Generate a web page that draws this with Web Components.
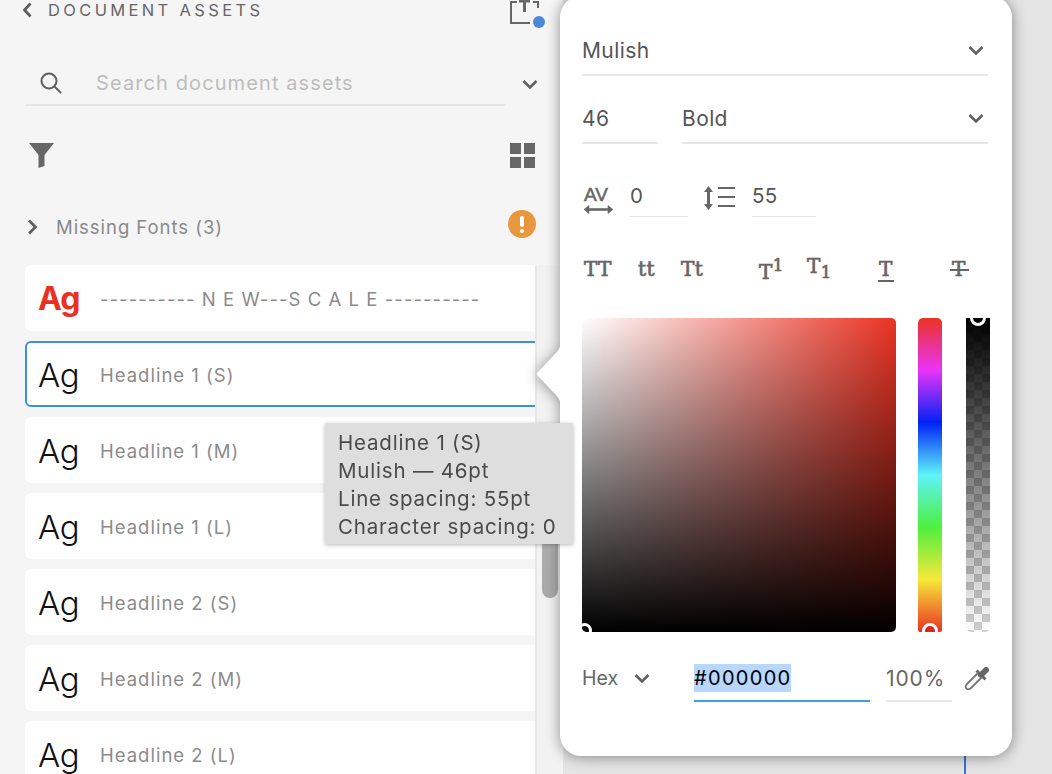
<!DOCTYPE html>
<html><head><meta charset="utf-8">
<style>
html,body{margin:0;padding:0;width:1052px;height:774px;overflow:hidden;background:#e4e4e4;font-family:Inter,"Liberation Sans",sans-serif}
</style></head><body>
<app-stage>
  <assets-panel slot="panel">
    <asset-row ag="red" spaced>---------- N E W---S C A L E ----------</asset-row>
    <asset-row selected>Headline 1 (S)</asset-row>
    <asset-row>Headline 1 (M)</asset-row>
    <asset-row>Headline 1 (L)</asset-row>
    <asset-row>Headline 2 (S)</asset-row>
    <asset-row>Headline 2 (M)</asset-row>
    <asset-row>Headline 2 (L)</asset-row>
  </assets-panel>
  <type-popover slot="popover"></type-popover>
  <hover-tip slot="tip">
    <div>Headline 1 (S)</div><div>Mulish — 46pt</div><div>Line spacing: 55pt</div><div>Character spacing: 0</div>
  </hover-tip>
</app-stage>
<script>
function def(name, html){
  customElements.define(name, class extends HTMLElement{
    constructor(){super();const r=this.attachShadow({mode:'open'});r.innerHTML=typeof html==='function'?html(this):html;}
  });
}
const chev=(w=16,h=11,sw=2.6,st='')=>`<svg style="flex:none;${st}" width="${w}" height="${h}" viewBox="0 0 16 11" fill="none" stroke="#5f5f5f" stroke-width="${sw}"><path d="M1.500 2 8 8.500 14.500 2"/></svg>`;

def('app-stage',`<style>
:host{display:block;position:relative;width:1052px;height:774px;overflow:hidden}
.panel{width:563px;height:774px}
.guide{position:absolute;left:964px;top:740px;width:2px;height:34px;background:#3b72cf}
::slotted([slot=popover]){position:absolute;left:560px;top:-4px}
::slotted([slot=tip]){position:absolute;left:325px;top:423px}
</style><div class="panel"><slot name="panel"></slot></div><div class="guide"></div><slot name="popover"></slot><slot name="tip"></slot>`);

def('assets-panel',`<style>
:host{display:block;width:563px;height:774px;background:#f5f5f5;color:#666;overflow:hidden}
.head{display:flex;align-items:center;height:20px;padding-left:22px;position:relative}
.title{margin-left:16px;font-size:16.500px;letter-spacing:3.350px;color:#666;line-height:20px;white-space:nowrap}
.t{position:absolute;left:509px;top:-3px}
.search{display:flex;align-items:center;justify-content:space-between;margin-top:42px;padding-left:26px;padding-right:25px;height:44px}
.field{display:flex;align-items:center;width:480px;height:42px;border-bottom:2px solid #e6e6e6}
.field svg{margin-left:14px}
.ph{margin-left:34px;font-size:20px;letter-spacing:1.100px;color:#bdbdbd;white-space:nowrap}
.tools{display:flex;justify-content:space-between;align-items:center;margin-top:36px;padding:0 28px 0 29px;height:26px}
.filter{margin-top:1px}
.grid{display:grid;grid-template-columns:11px 11px;gap:3px}
.grid i{display:block;width:11px;height:11px;background:#666}
.missing{display:flex;align-items:center;margin-top:34px;height:50px;padding-left:27px;padding-right:27px}
.missing span{margin-left:18px;font-size:18.500px;letter-spacing:.96px;color:#8a8a8a;flex:1;white-space:nowrap}
.warn{width:28px;height:28px;border-radius:50%;background:#e8973c;position:relative;margin-top:-6px}
.warn:before{content:"";position:absolute;left:12px;top:6px;width:4px;height:11px;background:#fff;border-radius:2px}
.warn:after{content:"";position:absolute;left:12px;top:19px;width:4px;height:4px;background:#fff;border-radius:50%}
.wrap{display:flex;margin-top:13px}
.list{margin-left:25px;width:510px;display:flex;flex-direction:column;gap:10px;overflow:hidden;height:520px}
.track{width:26px;border-left:2px solid #e7e7e7;background:#f2f2f2;padding-left:5px;box-sizing:border-box;height:520px}
.thumb{margin-top:165px;width:16px;height:168px;background:linear-gradient(#b6b6b6,#a9a9a9);border-radius:0 0 8px 8px}
</style>
<div class="head">
  <svg style="flex:none" width="10" height="16" viewBox="0 0 10 16" fill="none" stroke="#5c5c5c" stroke-width="2.800"><path d="M8.500 1.500 2.500 8l6 6.500"/></svg>
  <div class="title">DOCUMENT ASSETS</div>
  <svg class="t" width="36" height="32" viewBox="0 0 36 32"><path d="M2 12V5h6M24 5h5v6M2 12v14h19" fill="none" stroke="#666" stroke-width="2"/><path d="M10 3h11v2.500h-4V15h-3V5.500h-4z" fill="#666"/><circle cx="30" cy="25" r="6" fill="#4a8ad4"/></svg>
</div>
<div class="search">
  <div class="field">
    <svg width="22" height="22" viewBox="0 0 22 22" fill="none" stroke="#5f5f5f" stroke-width="2"><circle cx="9" cy="9" r="7.500"/><path d="M14.500 14.500 21 21"/></svg>
    <span class="ph">Search document assets</span>
  </div>
  ${chev(16,11,2.6)}
</div>
<div class="tools">
  <svg class="filter" width="25" height="25" viewBox="0 0 25 25"><path d="M0 0h25L15.500 12v11L9.500 25V12z" fill="#666"/></svg>
  <div class="grid"><i></i><i></i><i></i><i></i></div>
</div>
<div class="missing">
  <svg style="flex:none" width="11" height="16" viewBox="0 0 11 16" fill="none" stroke="#5f5f5f" stroke-width="2.800"><path d="M2 1.500 8.500 8 2 14.500"/></svg>
  <span>Missing Fonts (3)</span>
  <div class="warn"></div>
</div>
<div class="wrap"><div class="list"><slot></slot></div><div class="track"><div class="thumb"></div></div></div>`);

def('asset-row',h=>{
  const sel=h.hasAttribute('selected'), red=h.getAttribute('ag')==='red', sp=h.hasAttribute('spaced');
  return `<style>
:host{display:block;flex:none}
.r{display:flex;align-items:center;box-sizing:border-box;height:66px;width:514px;background:#fff;border-radius:6px;padding-top:1px;padding-left:${sel?11:13}px;${sel?'border:2px solid #3f8fdf;':'border:0;'}}
.ag{flex:none;width:62px;font-size:${red?32:33}px;line-height:40px;color:${red?'#e8321f':'#111'};font-weight:${red?700:300};letter-spacing:${red?'-1px':'-.4px'}}
.n{font-size:18.500px;letter-spacing:${sp?'1.050px':'1px'};color:#8b8b8b;white-space:nowrap}
</style><div class="r"><span class="ag">Ag</span><span class="n"><slot></slot></span></div>`;
});

def('hover-tip',`<style>
:host{display:block;box-sizing:border-box;width:248px;height:121px;background:#dedede;color:#4a4a4a;font-size:20.500px;letter-spacing:.8px;line-height:28px;padding:6px 0 0 13px;box-shadow:0 1px 4px rgba(0,0,0,.28);white-space:nowrap}
</style><slot></slot>`);

def('line-field',h=>{
  const w=h.getAttribute('w'), col=h.getAttribute('line')||'#e6e6e6', pb=h.getAttribute('pb')||8;
  return `<style>:host{display:block;flex:none;width:${w}px}
.f{display:flex;align-items:center;justify-content:space-between;height:${h.getAttribute('h')||32}px;padding-bottom:${pb}px;border-bottom:${h.getAttribute('lw')||2}px solid ${col};font-size:${h.getAttribute('fs')||21}px;letter-spacing:.4px;color:#555}
</style><div class="f"><slot></slot></div>`;
});

def('case-btn',h=>{
  const w=h.getAttribute('w'), k=h.getAttribute('k')||'';
  return `<style>:host{display:block;flex:none;width:${w}px;font-family:"DejaVu Serif",serif;font-size:20px;font-weight:400;color:#666;line-height:26px;letter-spacing:.4px;position:relative;-webkit-text-stroke:.7px #666}
sup,sub{font-size:7.500px;line-height:0;letter-spacing:0;vertical-align:baseline;position:relative;margin-left:3px}
sup{top:-12px}sub{top:3px}
.u{display:inline-block;border-bottom:2px solid #666;padding:0 1px;line-height:21px;margin-top:3px}
.s{display:inline-block;position:relative}
.s i{position:absolute;left:-2px;right:-3px;top:13px;height:2px;background:#666}
</style>${k==='u'?'<span class="u"><slot></slot></span>':k==='s'?'<span class="s"><slot></slot><i></i></span>':'<slot></slot>'}`;
});

def('color-picker',`<style>
:host{display:flex;height:314px;width:408px}
.sat{flex:none;position:relative;overflow:hidden;width:314px;height:314px;border-radius:5px;background:linear-gradient(#0000,#000),linear-gradient(90deg,#fff,#ea3323)}
.hue{flex:none;position:relative;overflow:hidden;width:24px;height:314px;margin-left:22px;border-radius:5px 5px 2px 2px;background:linear-gradient(#ea3323,#ea33f7 16.600%,#0022f5 33.300%,#5ef3f9 50%,#4ff040 66.600%,#f7e83a 83.300%,#ea3323)}
.alpha{flex:none;position:relative;overflow:hidden;width:24px;height:314px;margin-left:24px;border-radius:0 0 5px 5px;background:linear-gradient(#000,#0000),repeating-conic-gradient(#cfcfcf 0 25%,#fff 0 50%) 0 0/16px 16px}
.th{position:absolute;width:15px;height:15px;border-radius:50%;border:3px solid #fff;box-sizing:border-box}
</style>
<div class="sat"><div class="th" style="left:-5px;bottom:-6px;background:#000"></div></div>
<div class="hue"><div class="th" style="left:4px;bottom:-7px;width:16px;height:16px;background:#d8281c"></div></div>
<div class="alpha"><div class="th" style="left:4px;top:-8px;width:16px;height:16px;background:#000"></div></div>`);

def('type-popover',`<style>
:host{display:block;width:452px;height:760px;position:relative;filter:drop-shadow(0 1px 7px rgba(0,0,0,.42));color:#555}
.nub{position:absolute;left:-24px;top:342px;display:block}
.b{box-sizing:border-box;position:absolute;inset:0;background:#fff;border-radius:21px;padding:0 24px 0 22px}
.row{display:flex;align-items:center}
.r1{margin-top:38px}
.r2{margin-top:26px;gap:24px}
.r3{margin-top:42px;height:41px;align-items:flex-start}
.r4{margin-top:29px;height:26px}
.r5{margin-top:31px;align-items:flex-start}
.pick{margin-top:36px}
.av{flex:none;width:48px;display:flex;flex-direction:column;align-items:flex-start;padding-left:1px;box-sizing:border-box}
.av b{font-size:19px;line-height:17px;height:17px;font-family:"Liberation Sans",sans-serif;font-weight:400;-webkit-text-stroke:.5px #666;color:#666;margin-left:1px}
.av svg{margin-top:1px}
.lh{flex:none;margin-left:15px;margin-right:16px;display:block}
.hex{flex:none;font-size:19.500px;width:52px;color:#666;line-height:30px;height:30px}
.sel{background:#b8d7fb;color:#000;height:28px;line-height:28px;display:inline-block;font-size:20px;letter-spacing:1.300px}
.sh{margin-top:-12px}
</style>
<svg class="nub" width="26" height="72" viewBox="0 0 26 72"><path d="M26 0C25 10 22 13 18 17L1 35Q0 36 1 37L18 55C22 59 25 62 26 72Z" fill="#fff"/></svg>
<div class="b">
  <div class="row r1"><line-field w="406">Mulish ${chev(16,11,2.6,'margin-right:4px')}</line-field></div>
  <div class="row r2"><line-field w="76">46</line-field><line-field w="306">Bold ${chev(16,11,2.6,'margin-right:4px')}</line-field></div>
  <div class="row r3">
    <div class="av"><b>AV</b><svg width="32" height="11" viewBox="0 0 32 11"><path d="M1 5.500 6 1.500v3h19v-3l5 4-5 4v-3H6v3z" fill="#666" stroke="#666" stroke-width=".6"/></svg></div>
    <line-field w="58" h="30" pb="0" lw="1.500" fs="20.500"><span class="sh">0</span></line-field>
    <svg class="lh" width="33" height="24" viewBox="0 0 33 24"><path d="M5.500 0 10 6H7v12h3l-4.500 6L1 18h3V6H1z" fill="#666"/><path d="M15 2h17M15 11h17M15 20h17" stroke="#666" stroke-width="2"/></svg>
    <line-field w="64" h="30" pb="0" lw="1.500" fs="20.500"><span class="sh">55</span></line-field>
  </div>
  <div class="row r4" style="padding-left:2px">
    <case-btn w="54">TT</case-btn><case-btn w="43">tt</case-btn><case-btn w="78">Tt</case-btn><case-btn w="48">T<sup>1</sup></case-btn><case-btn w="71">T<sub>1</sub></case-btn><case-btn w="74" k="u">T</case-btn><case-btn w="30" k="s">T</case-btn>
  </div>
  <color-picker class="pick"></color-picker>
  <div class="row r5">
    <span class="hex">Hex</span>${chev(16,11,2.6,'margin-top:10px')}
    <line-field w="176" h="30" pb="7" line="#3f9fe6" style="margin-left:44px"><span class="sel">#000000</span></line-field>
    <line-field w="66" h="30" pb="7" style="margin-left:16px"><span style="color:#666;letter-spacing:.9px">100%</span></line-field>
    <svg style="margin-left:12px;margin-top:3px;flex:none" width="26" height="26" viewBox="0 0 26 26"><path d="M17 9 22 4" stroke="#666" stroke-width="6" stroke-linecap="round"/><path d="M12.500 4.500 21.500 13.500" stroke="#666" stroke-width="3"/><path d="M14 7 3 18c-1.500 1.500-1.500 3.500-.5 4.500s3 1 4.500-.5L18 11" fill="none" stroke="#777" stroke-width="1.800"/></svg>
  </div>
</div>`);
</script>
</body></html>
